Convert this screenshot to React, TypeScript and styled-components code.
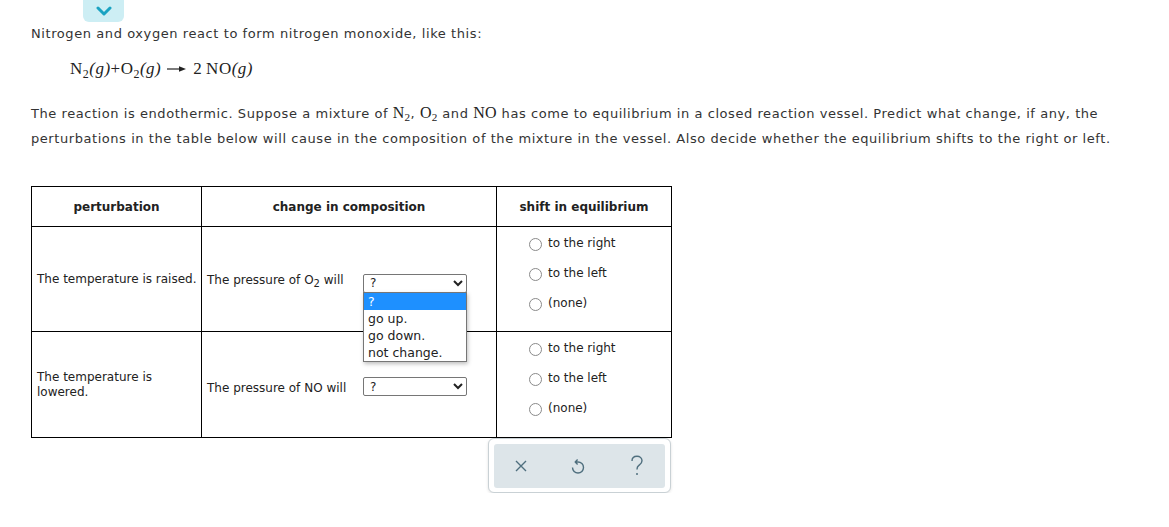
import React from "react";
import styled, { createGlobalStyle } from "styled-components";

const Global = createGlobalStyle`
  body {
    margin: 0;
    background: #fff;
    color: #333;
    font-family: "DejaVu Sans", Verdana, sans-serif;
  }
`;

const Page = styled.div`
  padding: 0 31px;
  width: 1169px;
  box-sizing: border-box;
`;

const Tab = styled.div`
  margin-left: 52px;
  width: 41px;
  height: 22px;
  background: #cdeef4;
  border-radius: 0 0 6px 6px;
  display: flex;
  align-items: center;
  justify-content: center;
`;

const Intro = styled.p`
  margin: 3px 0 0;
  font-size: 13px;
  line-height: 18px;
  letter-spacing: 0.58px;
`;

const Equation = styled.div`
  margin: 15px 0 0 39px;
  font-family: "Liberation Serif", "Times New Roman", serif;
  font-size: 17px;
  line-height: 22px;
  height: 22px;
  letter-spacing: 0.5px;
  color: #222;
  white-space: nowrap;
`;

const Sub = styled.sub`
  font-size: 0.7em;
  vertical-align: -0.3em;
  line-height: 0;
`;

const Ital = styled.i`
  font-style: italic;
`;

const Chem = styled.span`
  font-family: "Liberation Serif", "Times New Roman", serif;
  font-size: 16px;
  letter-spacing: 0.3px;
  color: #222;
`;

const Paragraph = styled.p`
  margin: 20px 0 0;
  font-size: 13px;
  line-height: 25px;
  letter-spacing: 0.56px;
`;

const Area = styled.div`
  margin-top: 35px;
  width: 640px;
  display: flex;
  flex-direction: column;
`;

const Table = styled.table`
  border-collapse: collapse;
  width: 640px;
  table-layout: fixed;
  font-size: 12px;
  color: #222;
`;

const Head = styled.th`
  height: 39px;
  border: 1px solid #000;
  font-weight: bold;
  text-align: center;
  padding: 0;
`;

const Cell = styled.td<{ $h: number }>`
  height: ${(p) => p.$h}px;
  border: 1px solid #000;
  padding: 0 2px 0 5px;
  vertical-align: middle;
  line-height: 15px;
`;

const RadioCell = styled.td`
  border: 1px solid #000;
  padding: 1px 0 0 32px;
  vertical-align: top;
`;

const ChangeRow = styled.div`
  display: flex;
  align-items: center;
  position: relative;
  padding-top: 7px;
`;

const Label = styled.span`
  width: 156px;
  flex: none;
`;

const Select = styled.select<{ $shift: number }>`
  width: 104px;
  height: 19px;
  margin-top: ${(p) => p.$shift}px;
  font-family: "DejaVu Sans", Verdana, sans-serif;
  font-size: 12px;
  border: 1px solid #767676;
  border-radius: 2px;
  padding: 0 2px;
  background: #fff;
  color: #222;
`;

const Menu = styled.ul`
  position: absolute;
  left: 156px;
  top: 26px;
  width: 104px;
  margin: 0;
  padding: 0;
  list-style: none;
  background: #fff;
  border: 1px solid #767676;
  box-sizing: border-box;
  box-shadow: 1px 2px 4px rgba(0, 0, 0, 0.25);
  z-index: 2;
  font-size: 12.5px;
`;

const Option = styled.li<{ $active?: boolean }>`
  height: 17px;
  line-height: 17px;
  padding: 0 4px;
  color: ${(p) => (p.$active ? "#fff" : "#222")};
  background: ${(p) => (p.$active ? "#1e90ff" : "transparent")};
`;

const RadioList = styled.div`
  display: flex;
  flex-direction: column;
`;

const RadioRow = styled.label`
  display: flex;
  align-items: center;
  height: 30px;
  gap: 6px;
`;

const Radio = styled.span`
  width: 11px;
  height: 11px;
  border: 1px solid #8a8a8a;
  border-radius: 50%;
  background: #fff;
  margin-top: 2px;
`;

const ToolWrap = styled.div`
  align-self: flex-end;
  margin-top: 0;
  width: 183px;
  height: 55px;
  box-sizing: border-box;
  border: 1px solid #c9d1d5;
  border-radius: 6px;
  padding: 5px 5px 4px;
  box-shadow: 0 1px 3px rgba(0, 0, 0, 0.12);
  background: #fff;
`;

const ToolBar = styled.div`
  height: 100%;
  background: #dde5e9;
  border-radius: 3px;
  display: flex;
  align-items: center;
  gap: 33px;
  padding-left: 15px;
`;

const ToolButton = styled.button<{ $nudge?: number }>`
  border: none;
  background: none;
  padding: 0;
  margin-left: ${(p) => p.$nudge ?? 0}px;
  width: 24px;
  height: 24px;
  display: flex;
  align-items: center;
  justify-content: center;
  color: #4f6f7e;
`;

const Arrow = () => (
  <svg width="22" height="8" viewBox="0 0 22 8" style={{ margin: "0 5px 0 5px", verticalAlign: "1px" }}>
    <line x1="1" y1="4" x2="16" y2="4" stroke="#222" strokeWidth="1.2" />
    <polygon points="13,1.3 20,4 13,6.7" fill="#222" />
  </svg>
);

const options = ["?", "go up.", "go down.", "not change."];

const Radios = () => (
  <RadioList>
    {["to the right", "to the left", "(none)"].map((t) => (
      <RadioRow key={t}>
        <Radio />
        {t}
      </RadioRow>
    ))}
  </RadioList>
);

export default function App() {
  return (
    <Page>
      <Global />
      <Tab>
        <svg width="16" height="10" viewBox="0 0 16 10">
          <path d="M2 2 L8 8 L14 2" fill="none" stroke="#1aa3c2" strokeWidth="3" strokeLinecap="round" strokeLinejoin="round" />
        </svg>
      </Tab>
      <Intro>Nitrogen and oxygen react to form nitrogen monoxide, like this:</Intro>
      <Equation>
        N<Sub>2</Sub>
        <Ital>(g)</Ital>+O<Sub>2</Sub>
        <Ital>(g)</Ital>
        <Arrow />2&thinsp;NO<Ital>(g)</Ital>
      </Equation>
      <Paragraph>
        The reaction is endothermic. Suppose a mixture of <Chem>N<Sub>2</Sub></Chem>, <Chem>O<Sub>2</Sub></Chem> and{" "}
        <Chem>NO</Chem> has come to equilibrium in a closed reaction vessel. Predict what change, if any, the
        <br />
        perturbations in the table below will cause in the composition of the mixture in the vessel. Also decide
        whether the equilibrium shifts to the right or left.
      </Paragraph>
      <Area>
        <Table>
          <colgroup>
            <col style={{ width: 170 }} />
            <col style={{ width: 295 }} />
            <col style={{ width: 175 }} />
          </colgroup>
          <thead>
            <tr>
              <Head>perturbation</Head>
              <Head>change in composition</Head>
              <Head>shift in equilibrium</Head>
            </tr>
          </thead>
          <tbody>
            <tr>
              <Cell $h={104}>The temperature is raised.</Cell>
              <Cell $h={104}>
                <ChangeRow>
                  <Label>
                    The pressure of O<sub style={{ fontSize: 10 }}>2</sub> will
                  </Label>
                  <Select defaultValue="?" $shift={1}>
                    {options.map((o) => (
                      <option key={o}>{o}</option>
                    ))}
                  </Select>
                  <Menu>
                    {options.map((o, i) => (
                      <Option key={o} $active={i === 0}>
                        {o}
                      </Option>
                    ))}
                  </Menu>
                </ChangeRow>
              </Cell>
              <RadioCell>
                <Radios />
              </RadioCell>
            </tr>
            <tr>
              <Cell $h={105}>
                The temperature is
                <br />
                lowered.
              </Cell>
              <Cell $h={105}>
                <ChangeRow>
                  <Label>The pressure of NO will</Label>
                  <Select defaultValue="?" $shift={-3}>
                    {options.map((o) => (
                      <option key={o}>{o}</option>
                    ))}
                  </Select>
                </ChangeRow>
              </Cell>
              <RadioCell>
                <Radios />
              </RadioCell>
            </tr>
          </tbody>
        </Table>
        <ToolWrap>
          <ToolBar>
            <ToolButton aria-label="clear">
              <svg width="14" height="14" viewBox="0 0 14 14">
                <path d="M2 2 L12 12 M12 2 L2 12" stroke="currentColor" strokeWidth="1.4" fill="none" />
              </svg>
            </ToolButton>
            <ToolButton aria-label="undo">
              <svg width="16" height="18" viewBox="0 0 16 18">
                <path d="M8 5 A5.5 5.5 0 1 1 2.5 10.5" stroke="currentColor" strokeWidth="1.4" fill="none" />
                <path d="M8 5 H5.6 M7.6 2.6 L5.2 5 L7.6 7.4" stroke="currentColor" strokeWidth="1.4" fill="none" strokeLinejoin="round" />
              </svg>
            </ToolButton>
            <ToolButton aria-label="help" $nudge={2}>
              <svg width="14" height="22" viewBox="0 0 14 22">
                <path d="M2 6 C2 2.5 4.5 1.2 7 1.2 C9.8 1.2 12 3 12 5.8 C12 8.5 10 9.5 8.6 10.6 C7.4 11.5 7 12.5 7 14.5" stroke="currentColor" strokeWidth="1.4" fill="none" />
                <circle cx="7" cy="19" r="1" fill="currentColor" />
              </svg>
            </ToolButton>
          </ToolBar>
        </ToolWrap>
      </Area>
    </Page>
  );
}
